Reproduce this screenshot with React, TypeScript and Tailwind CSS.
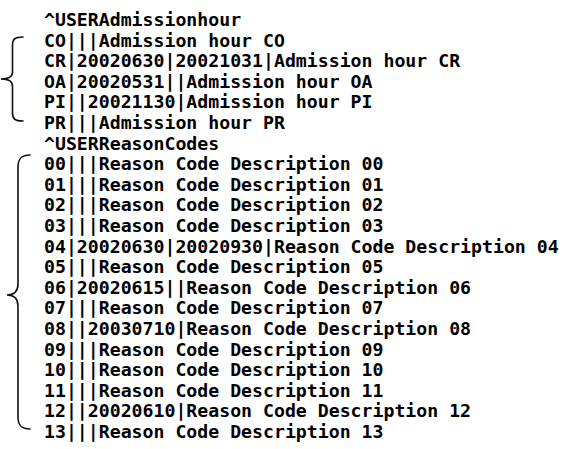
import React from "react";

const admission = [
  "CO|||Admission hour CO",
  "CR|20020630|20021031|Admission hour CR",
  "OA|20020531||Admission hour OA",
  "PI||20021130|Admission hour PI",
  "PR|||Admission hour PR",
];

const reasons = [
  "00|||Reason Code Description 00",
  "01|||Reason Code Description 01",
  "02|||Reason Code Description 02",
  "03|||Reason Code Description 03",
  "04|20020630|20020930|Reason Code Description 04",
  "05|||Reason Code Description 05",
  "06|20020615||Reason Code Description 06",
  "07|||Reason Code Description 07",
  "08||20030710|Reason Code Description 08",
  "09|||Reason Code Description 09",
  "10|||Reason Code Description 10",
  "11|||Reason Code Description 11",
  "12||20020610|Reason Code Description 12",
  "13|||Reason Code Description 13",
];

type BraceProps = { height: number; d: string };

// curly brace drawn in the left gutter
const Brace = ({ height, d }: BraceProps) => (
  <svg width={44} height={height} viewBox={`0 0 44 ${height}`} className="shrink-0 overflow-visible">
    <path d={d} fill="none" stroke="#111" strokeWidth={1.6} strokeLinecap="round" />
  </svg>
);

const Group = ({ title, lines, brace }: { title: string; lines: string[]; brace: string }) => (
  <div>
    <div className="pl-[44px]">{title}</div>
    <div className="flex">
      <Brace height={lines.length * 20.6} d={brace} />
      <div>
        {lines.map((l) => (
          <div key={l}>{l}</div>
        ))}
      </div>
    </div>
  </div>
);

export default function App() {
  return (
    <div
      className="w-[565px] h-[449px] bg-white text-black pt-[10px] font-bold text-[18.2px] leading-[20.6px] whitespace-pre overflow-hidden"
      style={{ fontFamily: '"DejaVu Sans Mono", "Liberation Mono", monospace' }}
    >
      <Group
        title="^USERAdmissionhour"
        lines={admission}
        brace="M 23 6 C 15 6, 12.5 8, 12.5 14 L 12.5 41 C 12.5 46, 8 48, 1 48 C 8 48, 12.5 50, 12.5 55 L 12.5 82 C 12.5 88, 15 90, 23 90"
      />
      <Group
        title="^USERReasonCodes"
        lines={reasons}
        brace="M 30 1 C 21 1, 18 5, 18 13 L 18 130 C 18 137, 14 141, 7 141 C 14 141, 18 145, 18 152 L 18 263 C 18 271, 21 275, 30 275"
      />
    </div>
  );
}
